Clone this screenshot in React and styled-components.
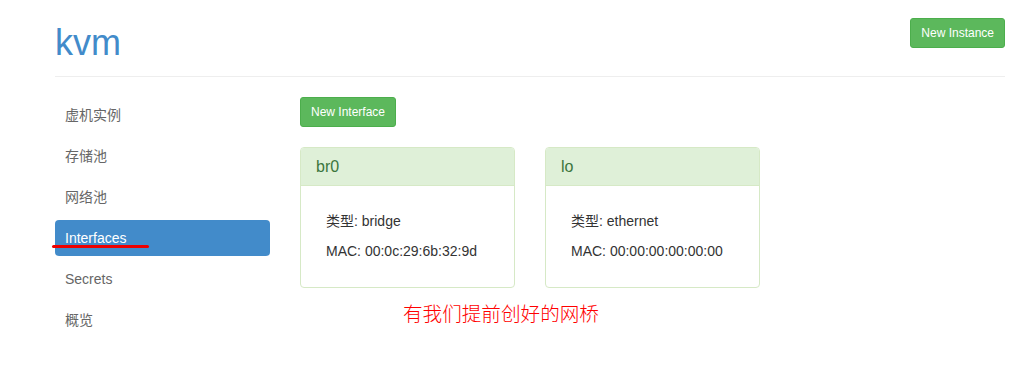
import React from "react";
import styled, { createGlobalStyle } from "styled-components";

const GlobalStyle = createGlobalStyle`
  * { box-sizing: border-box; }
  html, body { margin: 0; padding: 0; background: #fff; }
  body {
    font-family: "Liberation Sans", Arial, "Noto Sans CJK SC", sans-serif;
    font-size: 14px;
    line-height: 20px;
    color: #333;
  }
`;

const Page = styled.div`
  width: 1025px;
  padding: 0 20px 0 55px;
  position: relative;
`;

const Header = styled.header`
  display: flex;
  justify-content: space-between;
  align-items: flex-start;
  height: 77px;
  border-bottom: 1px solid #eee;
`;

const Title = styled.h1`
  margin: 23px 0 0;
  font-size: 36px;
  line-height: 39.6px;
  font-weight: 500;
  color: #428bca;
`;

const Button = styled.button`
  display: inline-block;
  font-family: "Liberation Sans", Arial, sans-serif;
  font-size: 12px;
  line-height: 18px;
  padding: 5px 10px;
  color: #fff;
  background: #5cb85c;
  border: 1px solid #4cae4c;
  border-radius: 3px;
  margin-top: ${(p) => p.$top || 0}px;
  cursor: pointer;
`;

const Body = styled.div`
  display: flex;
  gap: 30px;
  padding-top: 20px;
`;

const Sidebar = styled.nav`
  width: 215px;
  flex: none;
  display: flex;
  flex-direction: column;
  gap: 5px;
  position: relative;
`;

const NavItem = styled.a`
  display: block;
  height: 36px;
  padding: 8px 10px;
  border-radius: 4px;
  font-size: 14px;
  line-height: 20px;
  text-decoration: none;
  color: ${(p) => (p.$active ? "#fff" : "#666")};
  background: ${(p) => (p.$active ? "#428bca" : "transparent")};
`;

const RedMark = styled.span`
  position: absolute;
  left: -3px;
  top: 148px;
  width: 97px;
  height: 3px;
  border-radius: 2px;
  background: #ee0000;
`;

const Main = styled.main`
  flex: 1;
  position: relative;
`;

const Cards = styled.div`
  display: flex;
  gap: 30px;
  margin-top: 20px;
`;

const Card = styled.section`
  width: 215px;
  border: 1px solid #d6e9c6;
  border-radius: 4px;
  overflow: hidden;
`;

const CardHeader = styled.div`
  background: #dff0d8;
  border-bottom: 1px solid #d6e9c6;
  color: #3c763d;
  padding: 10px 15px;
  font-size: 16px;
  line-height: 17px;
`;

const CardBody = styled.div`
  padding: 25px 15px 26px 25px;
  display: flex;
  flex-direction: column;
  gap: 10px;
`;

const Line = styled.div`
  font-size: 14px;
  line-height: 20px;
  color: #333;
`;

const Note = styled.div`
  position: absolute;
  left: 103px;
  top: 204px;
  font-family: "Noto Sans CJK SC", sans-serif;
  font-size: 19.6px;
  line-height: 24px;
  color: #f00;
  font-weight: 300;
  white-space: nowrap;
`;

const navItems = ["虚机实例", "存储池", "网络池", "Interfaces", "Secrets", "概览"];

const ifaces = [
  { name: "br0", type: "bridge", mac: "00:0c:29:6b:32:9d" },
  { name: "lo", type: "ethernet", mac: "00:00:00:00:00:00" },
];

export default function App() {
  return (
    <>
      <GlobalStyle />
      <Page>
        <Header>
          <Title>kvm</Title>
          <Button $top={18}>New Instance</Button>
        </Header>
        <Body>
          <Sidebar>
            {navItems.map((n) => (
              <NavItem key={n} $active={n === "Interfaces"}>
                {n}
              </NavItem>
            ))}
            <RedMark />
          </Sidebar>
          <Main>
            <Button>New Interface</Button>
            <Cards>
              {ifaces.map((i) => (
                <Card key={i.name}>
                  <CardHeader>{i.name}</CardHeader>
                  <CardBody>
                    <Line>类型: {i.type}</Line>
                    <Line>MAC: {i.mac}</Line>
                  </CardBody>
                </Card>
              ))}
            </Cards>
            <Note>有我们提前创好的网桥</Note>
          </Main>
        </Body>
      </Page>
    </>
  );
}
